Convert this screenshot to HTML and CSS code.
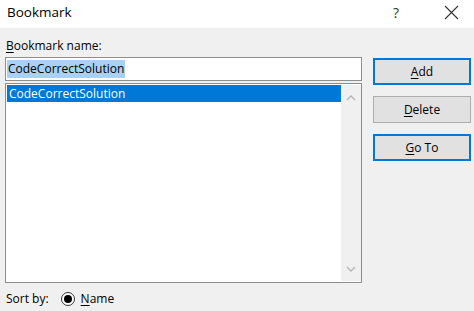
FILE: index.html
```html
<!DOCTYPE html>
<html>
<head>
<meta charset="utf-8">
<link rel="stylesheet" href="styles.css">
</head>
<body>
<div class="window">
  <div class="titlebar">
    <span class="title">Bookmark</span>
    <span class="help">?</span>
    <span class="close">
      <svg width="15" height="15" viewBox="0 0 15 15"><path d="M1 1L14 14M14 1L1 14" stroke="#333" stroke-width="1.1" fill="none"/></svg>
    </span>
  </div>
  <div class="content">
    <div class="left">
      <div class="label"><u>B</u>ookmark name:</div>
      <div class="input"><span class="sel">CodeCorrectSolution</span></div>
      <div class="listbox">
        <div class="items">
          <div class="item selected">CodeCorrectSolution</div>
        </div>
        <div class="scrollbar">
          <svg width="10" height="7" viewBox="0 0 10 7"><path d="M1 6L5 2L9 6" stroke="#b4b4b4" stroke-width="1.3" fill="none"/></svg>
          <svg width="10" height="7" viewBox="0 0 10 7"><path d="M1 1L5 5L9 1" stroke="#b4b4b4" stroke-width="1.3" fill="none"/></svg>
        </div>
      </div>
      <div class="sortby">
        <span>Sort by:</span>
        <span class="radio"><span class="dot"></span></span>
        <span><u>N</u>ame</span>
      </div>
    </div>
    <div class="buttons">
      <div class="btn primary"><u>A</u>dd</div>
      <div class="btn"><u>D</u>elete</div>
      <div class="btn primary"><u>G</u>o To</div>
    </div>
  </div>
</div>
</body>
</html>
```

FILE: styles.css
```css
* { box-sizing: border-box; }
html, body { margin: 0; padding: 0; }
body {
  width: 474px;
  height: 311px;
  overflow: hidden;
  font-family: "Open Sans", "Noto Sans", sans-serif;
  font-size: 12px;
  color: #000;
  background: #f0f0f0;
}
.window { width: 474px; height: 311px; display: flex; flex-direction: column; }
.titlebar {
  height: 29px;
  background: #fff;
  display: flex;
  align-items: center;
  padding-left: 7px;
}
.title { font-size: 13.5px; flex: 1; color: #000; padding-bottom: 4px; }
.help { font-size: 14px; color: #333; width: 20px; text-align: center; margin-right: 38px; padding-bottom: 4px; }
.close { width: 15px; height: 15px; margin-right: 15px; margin-bottom: 4px; display: flex; }
.content {
  flex: 1;
  display: flex;
  padding: 0 3px 0 5px;
  gap: 11px;
}
.left { width: 357px; display: flex; flex-direction: column; }
.label { height: 29px; padding-top: 9px; line-height: 18px; padding-left: 1px; }
u { text-decoration: underline; text-underline-offset: 2px; }
.input {
  height: 24px;
  background: #fff;
  border: 1px solid #8e8e8e;
  padding: 2px 1px;
  line-height: 18px;
}
.sel { background: #a9d0f5; display: inline-block; padding: 0 1px; height: 18px; }
.listbox {
  margin-top: 2px;
  height: 200px;
  background: #fff;
  border: 1px solid #8e8e8e;
  display: flex;
  padding: 1px 0 1px 1px;
}
.items { flex: 1; }
.item { height: 17px; line-height: 17px; padding-left: 2px; }
.item.selected { background: #0078d7; color: #fff; }
.scrollbar {
  width: 20px;
  background: #f0f0f0;
  display: flex;
  flex-direction: column;
  justify-content: space-between;
  align-items: center;
  padding: 9px 0 8px;
}
.sortby {
  display: flex;
  align-items: center;
  height: 28px;
  padding: 3px 0 0 1px;
}
.radio {
  width: 14px; height: 14px;
  border: 1px solid #333;
  border-radius: 50%;
  display: flex; align-items: center; justify-content: center;
  margin: 0 6px 0 12px;
  background: #fff;
}
.dot { width: 8px; height: 8px; border-radius: 50%; background: #000; }
.buttons { width: 98px; display: flex; flex-direction: column; gap: 11px; padding-top: 30px; }
.btn {
  height: 27px;
  background: #e1e1e1;
  border: 1px solid #adadad;
  display: flex; align-items: center; justify-content: center;
  line-height: 18px;
}
.btn.primary { border: 2px solid #0078d7; }
```
